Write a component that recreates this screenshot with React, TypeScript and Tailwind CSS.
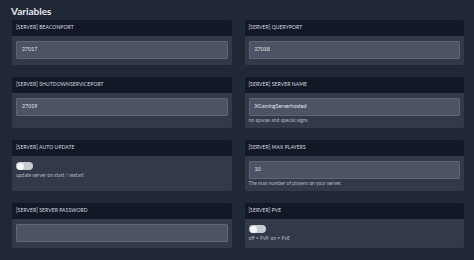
import React from "react";

type Field = {
  label: string;
  kind: "input" | "toggle";
  value?: string;
  help?: string;
};

const fields: Field[] = [
  { label: "[SERVER] BEACONPORT", kind: "input", value: "27017" },
  { label: "[SERVER] QUERYPORT", kind: "input", value: "27018" },
  { label: "[SERVER] SHUTDOWNSERVICEPORT", kind: "input", value: "27019" },
  { label: "[SERVER] SERVER NAME", kind: "input", value: "XGamingServerhosted", help: "no spaces and special signs" },
  { label: "[SERVER] AUTO UPDATE", kind: "toggle", help: "update server on start / restart" },
  { label: "[SERVER] MAX PLAYERS", kind: "input", value: "10", help: "The max number of players on your server." },
  { label: "[SERVER] SERVER PASSWORD", kind: "input", value: "" },
  { label: "[SERVER] PVE", kind: "toggle", help: "off = PvP, on = PvE" },
];

function Card({ f }: { f: Field }) {
  return (
    <div className="flex flex-col rounded-[2px] overflow-hidden">
      <div className="h-[16px] bg-[#121826] flex items-center px-[4px] text-[5px] text-[#d8dce2] tracking-[0.1px]">
        {f.label}
      </div>
      <div className="flex-1 bg-[#323a49] px-[4px] pt-[5px] pb-[5px] flex flex-col">
        {f.kind === "input" ? (
          <div className="h-[18px] mb-[1px] bg-[#4b5364] border border-[#5d6576] rounded-[1px] flex items-center px-[5px] text-[5.3px] text-[#e2e5ea]">
            {f.value}
          </div>
        ) : (
          <div className="pt-[1px] mb-[2px]">
            <div className="w-[17px] h-[8px] rounded-full bg-[#c9ccd2] flex items-center px-[1px]">
              <div className="w-[7px] h-[7px] rounded-full bg-[#f3f4f6]" />
            </div>
          </div>
        )}
        {f.help && (
          <div className="leading-[6px] text-[5px] text-[#b4b9c2]">{f.help}</div>
        )}
      </div>
    </div>
  );
}

export default function App() {
  return (
    <div
      className="w-[474px] h-[260px] bg-[#202735] pl-[12px] pr-[10px] pt-[4px]"
      style={{ fontFamily: "Lato, 'Open Sans', sans-serif" }}
    >
      <div className="text-[10px] font-bold text-[#e6e8ec] leading-[14px] mb-[2px] -ml-[1px]">Variables</div>
      <div className="grid grid-cols-2 gap-x-[13px] gap-y-[12px]">
        {fields.map((f) => (
          <Card key={f.label} f={f} />
        ))}
      </div>
    </div>
  );
}
